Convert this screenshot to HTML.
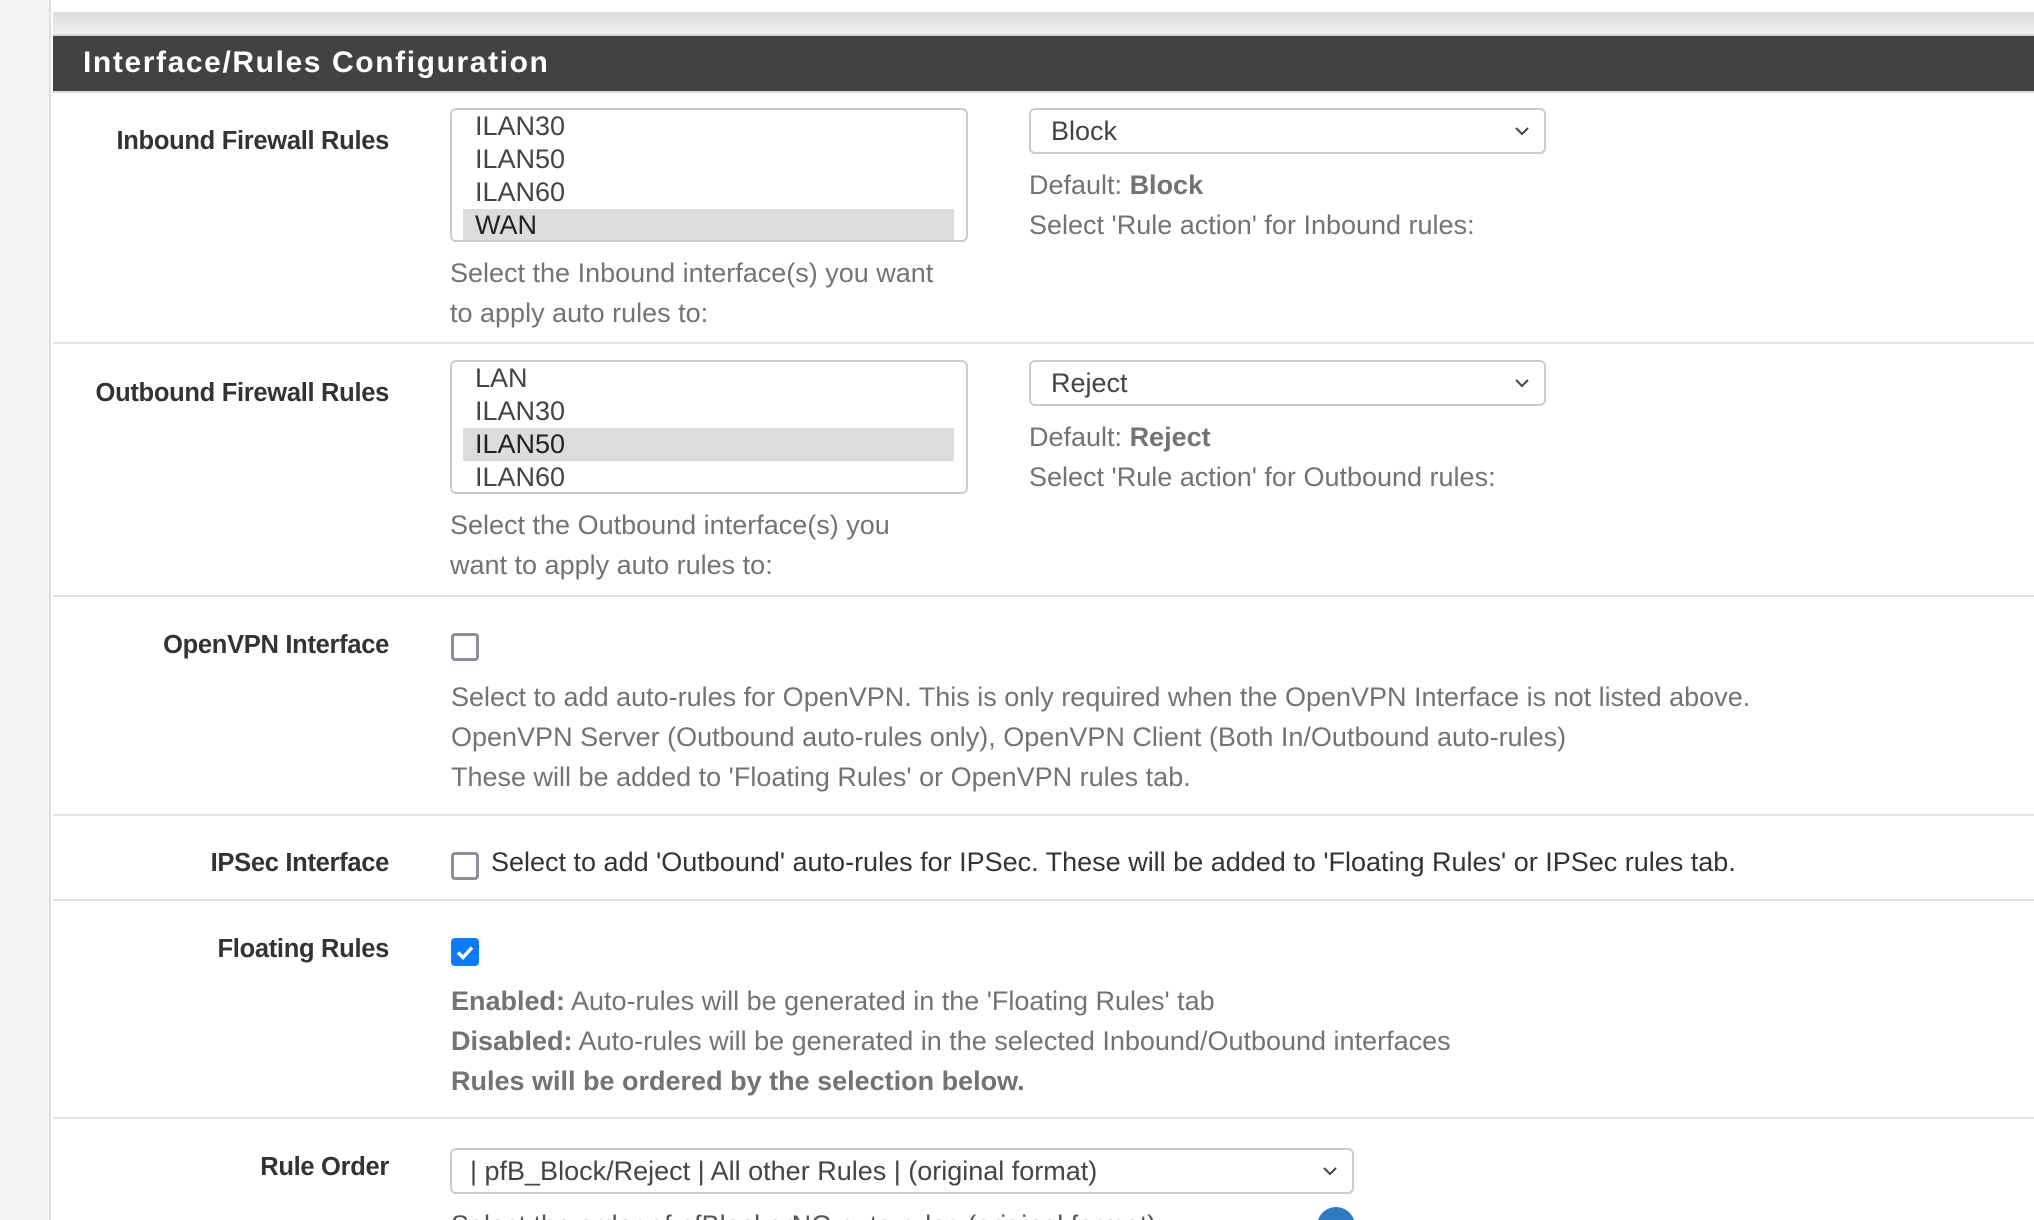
<!DOCTYPE html>
<html style="overflow:hidden;width:2034px;height:1220px"><head><meta charset="utf-8"><style>
*{margin:0;padding:0;box-sizing:border-box}
body{width:2034px;height:1220px;overflow:hidden;background:#fff;font-family:"Liberation Sans",Arial,sans-serif;position:relative}
.a{position:absolute;white-space:nowrap}
.side{left:0;top:0;width:51px;height:1220px;background:#f4f4f4;border-right:2px solid #dedede}
.lbl{font-weight:bold;font-size:25.5px;color:#333;right:1645px;line-height:30px;letter-spacing:-0.3px}
.help{font-size:27px;color:#737373;line-height:40px}
.sep{left:53px;right:0;height:2px;background:#e3e3e3}
.box{border:2px solid #ccc;border-radius:6px;background:#fff}
.opt{font-size:27px;color:#444;line-height:33px;padding-left:12px;height:33px}
.sel{background:#dcdcdc;color:#222}
.cb{width:28px;height:28px;border:3px solid #8f8e9b;border-radius:4px;background:#fff}
.chev{position:absolute;right:14px;top:14px}
</style></head><body>
<div class="a side"></div>
<div class="a" style="left:53px;right:0;top:0;height:12px;background:#fff"></div>
<div class="a" style="left:53px;right:0;top:12px;height:22px;background:linear-gradient(#dcdcdc,#efefef)"></div>
<div class="a" style="left:53px;right:0;top:34px;height:2px;background:#d5d5d5"></div>
<div class="a" style="left:53px;right:0;top:36px;height:55px;background:#424242"></div>
<div class="a" style="left:53px;right:0;top:91px;height:2px;background:#dedede"></div>
<div class="a" style="left:83px;top:45px;font-size:30px;font-weight:bold;color:#fff;letter-spacing:1.6px;line-height:36px">Interface/Rules Configuration</div>

<!-- Row1 -->
<div class="a lbl" style="top:126px">Inbound Firewall Rules</div>
<div class="a box" style="left:450px;top:108px;width:518px;height:134px;padding:0 12px 0 11px;overflow:hidden">
<div class="opt">ILAN30</div><div class="opt">ILAN50</div><div class="opt">ILAN60</div><div class="opt sel">WAN</div></div>
<div class="a help" style="left:450px;top:253px">Select the Inbound interface(s) you want<br>to apply auto rules to:</div>
<div class="a box" style="left:1029px;top:108px;width:517px;height:46px;font-size:27px;color:#444;line-height:42px;padding-left:20px">Block
<svg class="chev" width="16" height="14" viewBox="0 0 16 14"><path d="M2 4l6 6 6-6" fill="none" stroke="#444" stroke-width="2"/></svg></div>
<div class="a help" style="left:1029px;top:165px">Default: <b>Block</b><br>Select 'Rule action' for Inbound rules:</div>
<div class="a sep" style="top:342px"></div>

<!-- Row2 -->
<div class="a lbl" style="top:378px">Outbound Firewall Rules</div>
<div class="a box" style="left:450px;top:360px;width:518px;height:134px;padding:0 12px 0 11px;overflow:hidden">
<div class="opt">LAN</div><div class="opt">ILAN30</div><div class="opt sel">ILAN50</div><div class="opt">ILAN60</div></div>
<div class="a help" style="left:450px;top:505px">Select the Outbound interface(s) you<br>want to apply auto rules to:</div>
<div class="a box" style="left:1029px;top:360px;width:517px;height:46px;font-size:27px;color:#444;line-height:42px;padding-left:20px">Reject
<svg class="chev" width="16" height="14" viewBox="0 0 16 14"><path d="M2 4l6 6 6-6" fill="none" stroke="#444" stroke-width="2"/></svg></div>
<div class="a help" style="left:1029px;top:417px">Default: <b>Reject</b><br>Select 'Rule action' for Outbound rules:</div>
<div class="a sep" style="top:595px"></div>

<!-- Row3 -->
<div class="a lbl" style="top:630px">OpenVPN Interface</div>
<div class="a cb" style="left:451px;top:633px"></div>
<div class="a help" style="left:451px;top:677px">Select to add auto-rules for OpenVPN. This is only required when the OpenVPN Interface is not listed above.<br>OpenVPN Server (Outbound auto-rules only), OpenVPN Client (Both In/Outbound auto-rules)<br>These will be added to 'Floating Rules' or OpenVPN rules tab.</div>
<div class="a sep" style="top:814px"></div>

<!-- Row4 -->
<div class="a lbl" style="top:848px">IPSec Interface</div>
<div class="a cb" style="left:451px;top:852px"></div>
<div class="a" style="left:491px;top:847px;font-size:27px;color:#333;line-height:30px">Select to add 'Outbound' auto-rules for IPSec. These will be added to 'Floating Rules' or IPSec rules tab.</div>
<div class="a sep" style="top:899px"></div>

<!-- Row5 -->
<div class="a lbl" style="top:934px">Floating Rules</div>
<div class="a" style="left:451px;top:938px;width:28px;height:28px;background:#0b7bfa;border-radius:4px">
<svg width="28" height="28" viewBox="0 0 28 28"><path d="M7 14.5l5 5 9-10" fill="none" stroke="#fff" stroke-width="3.5"/></svg></div>
<div class="a help" style="left:451px;top:981px"><b>Enabled:</b> Auto-rules will be generated in the 'Floating Rules' tab<br><b>Disabled:</b> Auto-rules will be generated in the selected Inbound/Outbound interfaces<br><b>Rules will be ordered by the selection below.</b></div>
<div class="a sep" style="top:1117px"></div>

<!-- Row6 -->
<div class="a lbl" style="top:1152px">Rule Order</div>
<div class="a box" style="left:450px;top:1148px;width:904px;height:46px;font-size:27px;color:#444;line-height:42px;padding-left:18px">| pfB_Block/Reject | All other Rules | (original format)
<svg class="chev" width="16" height="14" viewBox="0 0 16 14"><path d="M2 4l6 6 6-6" fill="none" stroke="#444" stroke-width="2"/></svg></div>
<div class="a" style="left:0;top:1205px;width:2034px;height:15px;overflow:hidden">
<div class="a help" style="left:451px;top:0;color:#555">Select the order of pfBlockerNG auto-rules (original format)</div>
<div class="a" style="left:1317px;top:2px;width:38px;height:38px;border-radius:50%;background:#2f7bbf"></div>
</div>
</body></html>
